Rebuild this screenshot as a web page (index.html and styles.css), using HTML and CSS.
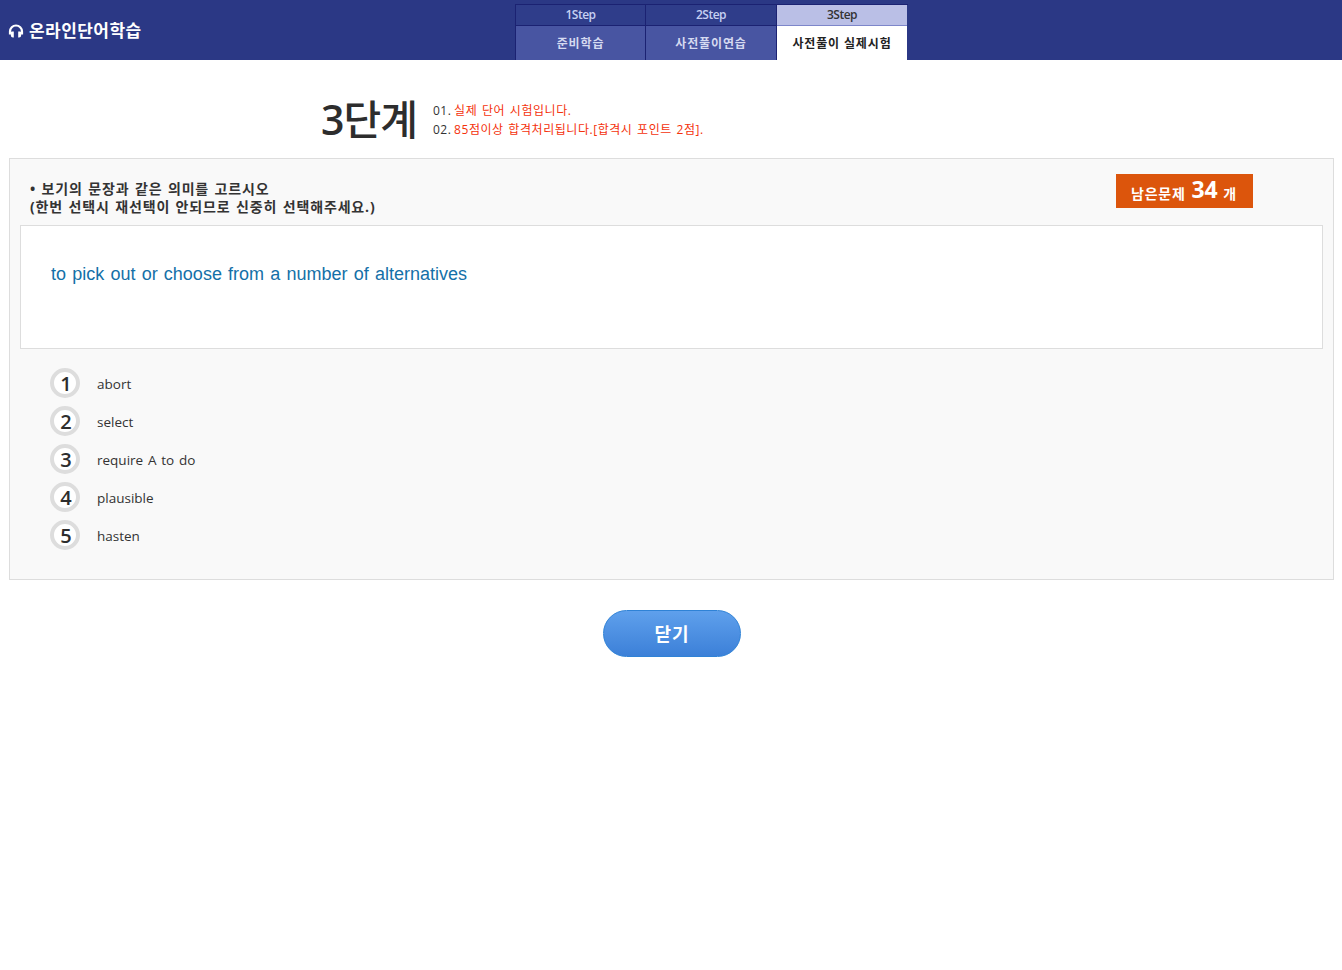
FILE: index.html
```html
<!DOCTYPE html>
<html lang="ko">
<head>
<meta charset="utf-8">
<title>온라인단어학습</title>
<link rel="stylesheet" href="styles.css">
</head>
<body>
<header class="top">
  <h1 class="brand">
    <svg class="brand-icon" width="16" height="14" viewBox="0 0 16 14"><path d="M2 10.500V7.500a6 6 0 0 1 12 0V10.500" fill="none" stroke="#fff" stroke-width="2.200"/><path d="M4 7.500h1.800v6H5A2.200 2.200 0 0 1 2.800 11.300V8.700A1.200 1.200 0 0 1 4 7.500zM12 7.500h-1.800v6H11a2.200 2.200 0 0 0 2.200-2.200V8.700A1.200 1.200 0 0 0 12 7.500z" fill="#fff"/></svg>
    <span>온라인단어학습</span>
  </h1>
  <div class="steps">
    <div class="step"><div class="step-num">1Step</div><div class="step-name">준비학습</div></div>
    <div class="step"><div class="step-num">2Step</div><div class="step-name">사전풀이연습</div></div>
    <div class="step active"><div class="step-num">3Step</div><div class="step-name">사전풀이 실제시험</div></div>
  </div>
</header>
<section class="intro">
  <h2 class="stage"><span class="stage-num">3</span>단계</h2>
  <ol class="notes">
    <li>01. <em>실제 단어 시험입니다.</em></li>
    <li>02. <em>85점이상 합격처리됩니다.[합격시 포인트 2점].</em></li>
  </ol>
</section>
<main class="panel">
  <div class="panel-head">
    <p class="instruction">• 보기의 문장과 같은 의미를 고르시오<br>(한번 선택시 재선택이 안되므로 신중히 선택해주세요.)</p>
    <div class="remain"><span class="remain-label">남은문제</span> <b>34</b> 개</div>
  </div>
  <div class="question">to pick out or choose from a number of alternatives</div>
  <ul class="choices">
    <li><span class="num">1</span><span class="choice-text">abort</span></li>
    <li><span class="num">2</span><span class="choice-text">select</span></li>
    <li><span class="num">3</span><span class="choice-text">require A to do</span></li>
    <li><span class="num">4</span><span class="choice-text">plausible</span></li>
    <li><span class="num">5</span><span class="choice-text">hasten</span></li>
  </ul>
</main>
<div class="actions"><button class="close" type="button">닫기</button></div>
</body>
</html>
```
FILE: styles.css
```css
* { box-sizing: border-box; }
html, body { margin: 0; padding: 0; }
body {
  background: #fff;
  color: #333;
  font-family: "Open Sans", "Noto Sans", "Noto Sans CJK KR", sans-serif;
  font-size: 14px;
}
.top {
  height: 60px;
  background: #2b3885;
  display: grid;
  grid-template-columns: 515px 393px;
  align-items: end;
}
.brand {
  margin: 0;
  align-self: center;
  padding-left: 8px;
  display: flex;
  align-items: center;
  gap: 5px;
  color: #fff;
  font-size: 17px;
  font-weight: 700;
  line-height: 22px;
  letter-spacing: 0.45px;
  position: relative;
  top: 1px;
}
.brand-icon { flex: none; }
.steps {
  display: grid;
  grid-template-columns: 130px 131px 131px;
  height: 56px;
  border-left: 1px solid #1b2272;
  border-top: 1px solid #1b2272;
}
.step { border-right: 1px solid #1b2272; display: flex; flex-direction: column; min-width: 0; }
.step-num {
  height: 21px;
  border-bottom: 1px solid #1b2272;
  background: #2f3d8a;
  color: #c6d0f2;
  font-size: 12px;
  font-weight: 600;
  line-height: 20px;
  text-align: center;
  letter-spacing: -0.5px;
}
.step-name {
  height: 34px;
  display: flex;
  align-items: center;
  justify-content: center;
  background: #4855a2;
  color: #d5daf0;
  font-size: 12px;
  font-weight: 700;
  letter-spacing: 0.85px;
}
.active { border-right-color: #2b3885; }
.active .step-num { background: #babfe6; color: #333; border-bottom-color: #7d86ca; }
.active .step-name { background: #fff; color: #222; }
.intro {
  height: 98px;
  padding-left: 321px;
  display: flex;
  gap: 16px;
}
.stage {
  margin: 0;
  padding-top: 31px;
  font-size: 41px;
  line-height: 56px;
  font-weight: 500;
  color: #2d2d2d;
  letter-spacing: -1px;
}
.stage-num { font-weight: 600; }
.notes {
  list-style: none;
  margin: 0;
  padding: 41px 0 0;
  font-size: 12px;
  line-height: 19px;
  color: #333;
  letter-spacing: 0.55px;
  word-spacing: 1px;
}
.notes em { font-style: normal; color: #f4320c; margin-left: -2px; }
.panel {
  margin: 0 8px 0 9px;
  height: 422px;
  background: #f9f9f9;
  border: 1px solid #ddd;
  padding: 0 10px;
}
.panel-head {
  height: 66px;
  position: relative;
  padding: 21px 0 0 10px;
}
.instruction {
  margin: 0;
  font-size: 14px;
  font-weight: 700;
  line-height: 18px;
  color: #333;
  letter-spacing: 0.85px;
  word-spacing: 1px;
}
.remain {
  position: absolute;
  left: 1096px;
  top: 15px;
  width: 137px;
  height: 34px;
  background: #dc550c;
  color: #fff;
  font-size: 14px;
  font-weight: 700;
  line-height: 39px;
  padding-left: 15px;
  white-space: nowrap;
}
.remain-label { letter-spacing: 0.8px; }
.remain b { font-size: 23px; font-weight: 700; line-height: 28px; padding: 0 2px; position: relative; top: -1px; }
.question {
  height: 124px;
  background: #fff;
  border: 1px solid #ddd;
  padding: 36px 30px 0;
  font-family: "Liberation Sans", Arial, sans-serif;
  font-size: 18px;
  line-height: 24px;
  color: #1470a8;
  word-spacing: 1.2px;
}
.choices {
  list-style: none;
  margin: 0;
  padding: 19px 0 0 30px;
  display: flex;
  flex-direction: column;
  gap: 8px;
}
.choices li {
  display: flex;
  align-items: center;
  gap: 17px;
  height: 30px;
  font-size: 13.5px;
  word-spacing: 1.3px;
  color: #333;
}
.choice-text { padding-top: 2px; }
.num {
  width: 30px;
  height: 30px;
  border-radius: 50%;
  background: #fff;
  border: 4px solid #ddd;
  padding: 2px 0 0 2px;
  display: flex;
  align-items: center;
  justify-content: center;
  font-size: 20px;
  font-weight: 600;
  line-height: 22px;
  color: #2d2d2d;
}
.actions { display: flex; justify-content: center; padding: 30px 0 0 2px; }
.close {
  width: 138px;
  height: 47px;
  border-radius: 24px;
  border: 1px solid #2f82d6;
  background: linear-gradient(#5fa0ec, #3c80d8);
  color: #fff;
  font-family: inherit;
  font-size: 18px;
  font-weight: 700;
  letter-spacing: 1px;
  padding: 0 0 2px;
}
```
